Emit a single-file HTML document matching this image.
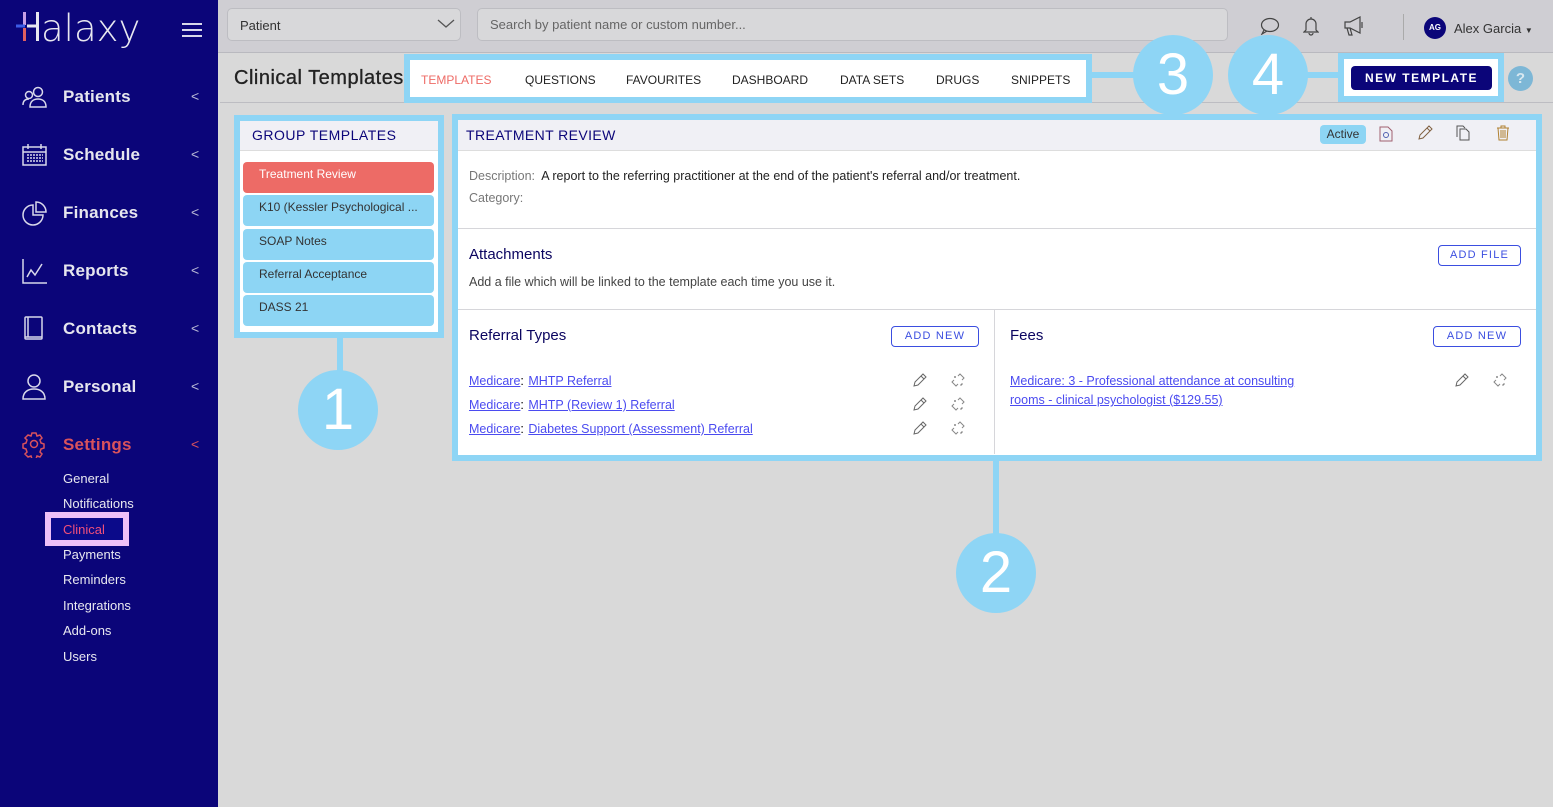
<!DOCTYPE html>
<html><head><meta charset="utf-8">
<style>
*{box-sizing:border-box;margin:0;padding:0}
body{width:1553px;height:807px;overflow:hidden;background:#d9d9d9;font-family:"Liberation Sans",sans-serif;position:relative}
.a{position:absolute}
#side{left:0;top:0;width:218px;height:807px;background:#0b0579}
.nav{position:absolute;left:63px;color:#e6e6ee;font-size:17px;font-weight:bold;letter-spacing:.2px}
.chev{position:absolute;left:191px;color:#b9b9d6;font-size:14px}
.sub{position:absolute;left:63px;color:#e8e8f0;font-size:13px}
.ic{position:absolute;left:22px}
#top{left:218px;top:0;width:1335px;height:53px;background:#cfced3;border-bottom:1px solid #b9b9bf}
.box{border:6px solid #8ed5f5}
.circle{position:absolute;width:80px;height:80px;border-radius:50%;background:#8ed5f5;color:#fff;font-size:58px;text-align:center;line-height:80px}
.tab{position:absolute;top:73px;font-size:12px;color:#222}
.item{position:absolute;left:243px;width:191px;height:31px;border-radius:4px;background:#8dd5f4;color:#333;font-size:12px;padding:6px 0 0 16px;line-height:1}
.lnk{color:#4b4bf0;text-decoration:underline;font-size:12.5px}
.btn{position:absolute;border:1px solid #3b4ee0;border-radius:4px;color:#3b4ee0;font-size:11px;letter-spacing:1.2px;text-align:center;background:#fff}
</style></head><body>
<div id="side" class="a">
  <svg class="a" style="left:15px;top:10px" width="145" height="42" viewBox="0 0 145 42">
    <rect x="8" y="2" width="3" height="13" fill="#c8a0e6"/><rect x="8" y="18" width="3" height="13" fill="#e06060"/>
    <rect x="1" y="14.5" width="9" height="3" fill="#3c5ce6"/><rect x="12" y="14.5" width="9" height="3" fill="#e8e8f0"/>
    <rect x="21" y="2" width="3" height="29" fill="#e8e8f0"/>
    <text x="26" y="31" fill="#e8e8f0" font-size="37" font-family="DejaVu Sans" font-weight="300" letter-spacing="0">alaxy</text>
  </svg>
  <svg class="a" style="left:182px;top:22px" width="20" height="16"><path d="M0 2h20M0 8h20M0 14h20" stroke="#d8d8ea" stroke-width="2"/></svg>
  <svg class="ic" style="top:86px" width="26" height="22" fill="none" stroke="#d8d8ea" stroke-width="1.5"><circle cx="16" cy="6" r="4.5"/><circle cx="7" cy="9" r="3.5"/><path d="M8 21c0-6 4-8 8-8s8 2 8 8zM1 19c0-4 2-6 6-6"/></svg>
  <div class="nav" style="top:87px">Patients</div><div class="chev" style="top:88px">&lt;</div>
  <svg class="ic" style="top:143px" width="26" height="24" fill="none" stroke="#d8d8ea" stroke-width="1.5"><rect x="1" y="4" width="23" height="18"/><path d="M1 9h23M6 1v5M19 1v5"/><path d="M5 12h16M5 15h16M5 18h16" stroke-dasharray="2 1"/></svg>
  <div class="nav" style="top:145px">Schedule</div><div class="chev" style="top:146px">&lt;</div>
  <svg class="ic" style="top:201px" width="26" height="26" fill="none" stroke="#d8d8ea" stroke-width="1.5"><path d="M11 4a10 10 0 1 0 10 10H11z"/><path d="M14 1v10h10A10 10 0 0 0 14 1z"/></svg>
  <div class="nav" style="top:203px">Finances</div><div class="chev" style="top:204px">&lt;</div>
  <svg class="ic" style="top:258px" width="26" height="26" fill="none" stroke="#d8d8ea" stroke-width="1.5"><path d="M1 1v24h24"/><path d="M5 19l4-7 4 5 7-11" /></svg>
  <div class="nav" style="top:261px">Reports</div><div class="chev" style="top:262px">&lt;</div>
  <svg class="ic" style="top:316px" width="24" height="26" fill="none" stroke="#d8d8ea" stroke-width="1.5"><rect x="3" y="1" width="17" height="22" rx="1"/><path d="M3 21h17M6 1v20"/></svg>
  <div class="nav" style="top:319px">Contacts</div><div class="chev" style="top:320px">&lt;</div>
  <svg class="ic" style="top:374px" width="26" height="26" fill="none" stroke="#d8d8ea" stroke-width="1.5"><circle cx="12" cy="7" r="6"/><path d="M1 25c0-7 5-10 11-10s11 3 11 10z"/></svg>
  <div class="nav" style="top:377px">Personal</div><div class="chev" style="top:378px">&lt;</div>
  <svg class="ic" style="top:432px" width="26" height="26" fill="none" stroke="#d9525c" stroke-width="1.5"><circle cx="12" cy="12" r="3.5"/><path d="M10 1h4l1 3 3-1 2 3-2 2 1 3 3 1v4l-3 1-1 3 2 2-2 3-3-1-1 3h-4l-1-3-3 1-3-3 2-2-1-3-3-1v-4l3-1 1-3-2-2 3-3 3 1z"/></svg>
  <div class="nav" style="top:435px;color:#d9525c">Settings</div><div class="chev" style="top:436px;color:#d9525c">&lt;</div>
  <div class="sub" style="top:471px">General</div>
  <div class="sub" style="top:496px">Notifications</div>
  <div class="a" style="left:45px;top:512px;width:84px;height:34px;border:6px solid #eec0f8;background:#0b0a8a"></div>
  <div class="sub" style="top:522px;color:#f0507a">Clinical</div>
  <div class="sub" style="top:547px">Payments</div>
  <div class="sub" style="top:572px">Reminders</div>
  <div class="sub" style="top:598px">Integrations</div>
  <div class="sub" style="top:623px">Add-ons</div>
  <div class="sub" style="top:649px">Users</div>
</div>

<div id="top" class="a"></div>
<div class="a" style="left:227px;top:8px;width:234px;height:33px;border:1px solid #bdbdc2;border-radius:5px;background:#d8d8da;font-size:13px;color:#333;padding:9px 12px">Patient</div>
<svg class="a" style="left:437px;top:19px" width="18" height="10"><path d="M1 1l8 7 8-7" stroke="#555" fill="none" stroke-width="1.3"/></svg>
<div class="a" style="left:477px;top:8px;width:751px;height:33px;border:1px solid #bdbdc2;border-radius:5px;background:#d8d8da;font-size:13px;color:#666;padding:8px 12px">Search by patient name or custom number...</div>
<svg class="a" style="left:1260px;top:17px" width="20" height="18" fill="none" stroke="#444" stroke-width="1.2"><ellipse cx="10" cy="8" rx="8.5" ry="6.5"/><path d="M4 13l-2 4 5-3"/></svg>
<svg class="a" style="left:1303px;top:16px" width="16" height="20" fill="none" stroke="#444" stroke-width="1.2"><path d="M3 14V8a5 5 0 0 1 10 0v6l2 2H1zM6 17a2 2 0 0 0 4 0M8 1v2"/></svg>
<svg class="a" style="left:1343px;top:16px" width="22" height="20" fill="none" stroke="#444" stroke-width="1.2"><path d="M2 6h5l10-5v16L7 12H2zM4 12l2 7h3l-2-7M19 6v6"/></svg>
<div class="a" style="left:1403px;top:14px;width:1px;height:26px;background:#aaa"></div>
<div class="a" style="left:1424px;top:17px;width:22px;height:22px;border-radius:50%;background:#0b0579;color:#fff;font-size:8px;font-weight:bold;text-align:center;line-height:22px">AG</div>
<div class="a" style="left:1454px;top:21px;font-size:13px;color:#333">Alex Garcia <span style="font-size:8px">&#9660;</span></div>

<div class="a" style="left:234px;top:67px;font-size:20px;color:#222;letter-spacing:.5px;-webkit-text-stroke:.3px #222">Clinical Templates</div>
<div class="a" style="left:220px;top:102px;width:1333px;height:1px;background:#bdbdc2"></div>
<div class="a box" style="left:404px;top:54px;width:688px;height:49px;background:#fff"></div>
<div class="tab" style="left:421px;color:#ee6b66">TEMPLATES</div>
<div class="tab" style="left:525px">QUESTIONS</div>
<div class="tab" style="left:626px">FAVOURITES</div>
<div class="tab" style="left:732px">DASHBOARD</div>
<div class="tab" style="left:840px">DATA SETS</div>
<div class="tab" style="left:936px">DRUGS</div>
<div class="tab" style="left:1011px">SNIPPETS</div>
<div class="a" style="left:1091px;top:72px;width:50px;height:6px;background:#8ed5f5"></div>
<div class="circle" style="left:1133px;top:35px">3</div>
<div class="circle" style="left:1228px;top:35px">4</div>
<div class="a" style="left:1306px;top:72px;width:36px;height:6px;background:#8ed5f5"></div>
<div class="a box" style="left:1338px;top:53px;width:166px;height:49px;background:#fff"></div>
<div class="a" style="left:1351px;top:66px;width:141px;height:24px;border-radius:4px;background:#0b0579;color:#fff;font-size:12px;font-weight:bold;letter-spacing:1.5px;text-align:center;line-height:24px">NEW TEMPLATE</div>
<div class="a" style="left:1508px;top:66px;width:25px;height:25px;border-radius:50%;background:#7db7d6;color:#d8e8f0;font-size:15px;font-weight:bold;text-align:center;line-height:25px">?</div>

<div class="a box" style="left:234px;top:115px;width:210px;height:223px;background:#fff"></div>
<div class="a" style="left:240px;top:121px;width:198px;height:30px;background:#f0f0f5;border-bottom:1px solid #ddd"></div>
<div class="a" style="left:252px;top:127px;font-size:14px;color:#0b0579;letter-spacing:.5px">GROUP TEMPLATES</div>
<div class="item" style="top:162px;background:#ed6b66;color:#fff">Treatment Review</div>
<div class="item" style="top:195px">K10 (Kessler Psychological ...</div>
<div class="item" style="top:229px">SOAP Notes</div>
<div class="item" style="top:262px">Referral Acceptance</div>
<div class="item" style="top:295px">DASS 21</div>
<div class="a" style="left:337px;top:337px;width:6px;height:36px;background:#8ed5f5"></div>
<div class="circle" style="left:298px;top:370px">1</div>

<div class="a box" style="left:452px;top:114px;width:1090px;height:347px;background:#fff"></div>
<div class="a" style="left:458px;top:120px;width:1078px;height:31px;background:#f0f0f5;border-bottom:1px solid #ddd"></div>
<div class="a" style="left:466px;top:127px;font-size:14px;color:#0b0579;letter-spacing:.4px">TREATMENT REVIEW</div>
<div class="a" style="left:1320px;top:125px;width:46px;height:19px;border-radius:4px;background:#8dd5f4;font-size:12px;color:#333;text-align:center;line-height:19px">Active</div>
<svg class="a" style="left:1379px;top:126px" width="14" height="16" fill="none" stroke="#a06070" stroke-width="1"><path d="M1 1h8l4 4v10H1z"/><circle cx="7" cy="9" r="2.5" stroke="#5060b0"/></svg>
<svg class="a" style="left:1417px;top:125px" width="16" height="16" fill="none" stroke="#806040" stroke-width="1"><path d="M2 14l1-4 9-9 3 3-9 9zM10 3l3 3"/></svg>
<svg class="a" style="left:1456px;top:125px" width="14" height="16" fill="none" stroke="#555" stroke-width="1"><path d="M4 4h6l3 3v8H4zM1 12V1h6l2 2"/></svg>
<svg class="a" style="left:1496px;top:125px" width="14" height="16" fill="none" stroke="#b08030" stroke-width="1"><path d="M1 3h12M5 3V1h4v2M2 3l1 12h8l1-12M5 5v8M7 5v8M9 5v8"/></svg>
<div class="a" style="left:469px;top:169px;font-size:12.5px;color:#777">Description:&nbsp; <span style="color:#222">A report to the referring practitioner at the end of the patient's referral and/or treatment.</span></div>
<div class="a" style="left:469px;top:191px;font-size:12.5px;color:#777">Category:</div>
<div class="a" style="left:458px;top:228px;width:1078px;height:1px;background:#d6d6da"></div>
<div class="a" style="left:469px;top:246px;font-size:15px;color:#0b0560">Attachments</div>
<div class="a" style="left:469px;top:275px;font-size:12.5px;color:#444">Add a file which will be linked to the template each time you use it.</div>
<div class="btn" style="left:1438px;top:245px;width:83px;height:21px;line-height:19px">ADD FILE</div>
<div class="a" style="left:458px;top:309px;width:1078px;height:1px;background:#d6d6da"></div>
<div class="a" style="left:994px;top:310px;width:1px;height:144px;background:#d6d6da"></div>
<div class="a" style="left:469px;top:327px;font-size:15px;color:#0b0560">Referral Types</div>
<div class="btn" style="left:891px;top:326px;width:88px;height:21px;line-height:19px">ADD NEW</div>
<div class="a" style="left:469px;top:372px"><span class="lnk">Medicare</span><span style="font-size:12.5px">:</span> <span class="lnk">MHTP Referral</span></div>
<div class="a" style="left:469px;top:396px"><span class="lnk">Medicare</span><span style="font-size:12.5px">:</span> <span class="lnk">MHTP (Review 1) Referral</span></div>
<div class="a" style="left:469px;top:420px"><span class="lnk">Medicare</span><span style="font-size:12.5px">:</span> <span class="lnk">Diabetes Support (Assessment) Referral</span></div>
<div class="a" style="left:1010px;top:327px;font-size:15px;color:#0b0560">Fees</div>
<div class="btn" style="left:1433px;top:326px;width:88px;height:21px;line-height:19px">ADD NEW</div>
<div class="a lnk" style="left:1010px;top:372px;line-height:19px">Medicare: 3 - Professional attendance at consulting<br>rooms - clinical psychologist ($129.55)</div>
<svg width="0" height="0" style="position:absolute"><defs>
<g id="pen"><path d="M2 13l1-4 8-8 3 3-8 8zM9 3l3 3" fill="none" stroke="#666" stroke-width="1"/></g>
<g id="unl"><path d="M3 7l-2 2 4 4 2-2M11 7l2-2-4-4-2 2M4 3v2M3 4h2M10 11v2M11 10v2" fill="none" stroke="#888" stroke-width="1"/></g>
</defs></svg>
<svg class="a" style="left:912px;top:373px" width="16" height="16"><use href="#pen"/></svg>
<svg class="a" style="left:951px;top:373px" width="16" height="16"><use href="#unl"/></svg>
<svg class="a" style="left:912px;top:397px" width="16" height="16"><use href="#pen"/></svg>
<svg class="a" style="left:951px;top:397px" width="16" height="16"><use href="#unl"/></svg>
<svg class="a" style="left:912px;top:421px" width="16" height="16"><use href="#pen"/></svg>
<svg class="a" style="left:951px;top:421px" width="16" height="16"><use href="#unl"/></svg>
<svg class="a" style="left:1454px;top:373px" width="16" height="16"><use href="#pen"/></svg>
<svg class="a" style="left:1493px;top:373px" width="16" height="16"><use href="#unl"/></svg>
<div class="a" style="left:993px;top:460px;width:6px;height:76px;background:#8ed5f5"></div>
<div class="circle" style="left:956px;top:533px">2</div>
</body></html>
